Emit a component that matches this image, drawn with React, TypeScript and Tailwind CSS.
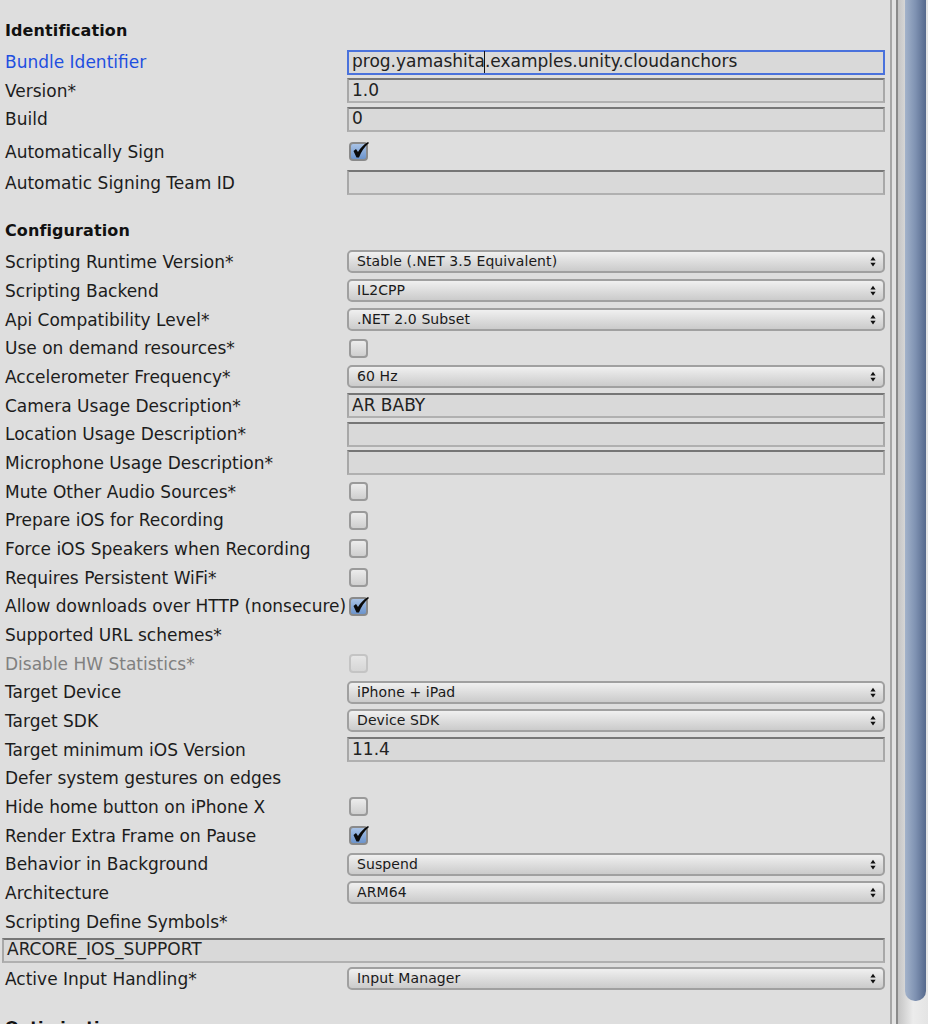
const font = { fontFamily: '"DejaVu Sans", sans-serif' };

function Check() {
  return (
    <svg viewBox="0 0 16 16" className="absolute left-[2px] top-[-2px] w-[16px] h-[16px]">
      <path d="M0.5 9 L3 7 L5 10 C7.5 6 10.5 2.5 15 0 L16 1 C11 5 8 10 6 15.5 L3.5 15.5 Z" fill="#0a0a0a" />
    </svg>
  );
}

function Checkbox({ checked, disabled }: { checked?: boolean; disabled?: boolean }) {
  const cls = checked
    ? "bg-gradient-to-b from-[#a9c3e6] to-[#6c94cc] border-[#8a8a8a]"
    : disabled
      ? "bg-gradient-to-b from-[#e6e6e6] to-[#d6d6d6] border-[#c4c4c4]"
      : "bg-gradient-to-b from-[#ececec] to-[#cfcfcf] border-[#9a9a9a]";
  return <div className={`relative ml-[2px] w-[19px] h-[19px] rounded-[4px] border-2 ${cls}`}>{checked && <Check />}</div>;
}

function Arrows() {
  return (
    <svg viewBox="0 0 8 14" className="w-[6px] h-[11px] mr-[7px]">
      <path d="M4 0.5 L7.5 5.5 L0.5 5.5 Z M4 13.5 L7.5 8.5 L0.5 8.5 Z" fill="#111" />
    </svg>
  );
}

function Select({ value }: { value: string }) {
  return (
    <div className="flex-1 h-[23px] flex items-center justify-between rounded-[5px] border-2 border-[#a0a0a0] bg-gradient-to-b from-[#f0f0f0] to-[#cbcbcb] pl-[8px] text-[14px] tracking-[0.1px] text-[#1a1a1a]">
      <span>{value}</span>
      <Arrows />
    </div>
  );
}

function Field({ value, focus }: { value?: string; focus?: boolean }) {
  const cls = focus
    ? "border-2 border-[#4a72dc]"
    : "border-2 border-t-[#767676] border-x-[#a8a8a8] border-b-[#b0b0b0]";
  return (
    <div className={`flex-1 h-[25px] flex items-center bg-[#d9d9d9] pl-[3px] text-[17px] text-[#222] ${cls}`}>
      {value}
    </div>
  );
}

function Row({ label, h = "h-[28.68px]", tone = "text-[#1c1c1c]", children }: { label: string; h?: string; tone?: string; children?: React.ReactNode }) {
  return (
    <div className={`flex items-center ${h}`}>
      <div className={`w-[347px] shrink-0 pl-[5px] pt-[2px] text-[17px] whitespace-nowrap ${tone}`}>{label}</div>
      {children}
    </div>
  );
}

function Heading({ children, h }: { children: string; h: string }) {
  return <div className={`flex items-center pl-[5px] pt-[2px] text-[16px] tracking-[0.1px] font-bold text-[#111] ${h}`}>{children}</div>;
}

export default function App() {
  return (
    <div className="h-[1024px] w-[928px] overflow-hidden flex bg-[#dedede]" style={font}>
      <div className="w-[890px] shrink-0 pt-[16px] pr-[5px]">
        <Heading h="h-[28px]">Identification</Heading>
        <div className="h-[4px]" />
        <Row label="Bundle Identifier" tone="text-[#1f4fe0]" h="h-[28px]">
          <div className="relative flex-1 flex">
            <Field value="prog.yamashita.examples.unity.cloudanchors" focus />
            <div className="absolute left-[137px] top-[1px] w-[1px] h-[22px] bg-[#111]" />
          </div>
        </Row>
        <Row label="Version*" h="h-[28.5px]"><Field value="1.0" /></Row>
        <Row label="Build" h="h-[29px]"><Field value="0" /></Row>
        <Row label="Automatically Sign" h="h-[36px]"><Checkbox checked /></Row>
        <Row label="Automatic Signing Team ID" h="h-[26.5px]"><Field /></Row>
        <div className="h-[20px]" />
        <Heading h="h-[28px]">Configuration</Heading>
        <div className="h-[3.66px]" />
        <Row label="Scripting Runtime Version*"><Select value="Stable (.NET 3.5 Equivalent)" /></Row>
        <Row label="Scripting Backend"><Select value="IL2CPP" /></Row>
        <Row label="Api Compatibility Level*"><Select value=".NET 2.0 Subset" /></Row>
        <Row label="Use on demand resources*"><Checkbox /></Row>
        <Row label="Accelerometer Frequency*"><Select value="60 Hz" /></Row>
        <Row label="Camera Usage Description*"><Field value="AR BABY" /></Row>
        <Row label="Location Usage Description*"><Field /></Row>
        <Row label="Microphone Usage Description*"><Field /></Row>
        <Row label="Mute Other Audio Sources*"><Checkbox /></Row>
        <Row label="Prepare iOS for Recording"><Checkbox /></Row>
        <Row label="Force iOS Speakers when Recording"><Checkbox /></Row>
        <Row label="Requires Persistent WiFi*"><Checkbox /></Row>
        <Row label="Allow downloads over HTTP (nonsecure)"><Checkbox checked /></Row>
        <Row label="Supported URL schemes*" />
        <Row label="Disable HW Statistics*" tone="text-[#808080]"><Checkbox disabled /></Row>
        <Row label="Target Device"><Select value="iPhone + iPad" /></Row>
        <Row label="Target SDK"><Select value="Device SDK" /></Row>
        <Row label="Target minimum iOS Version"><Field value="11.4" /></Row>
        <Row label="Defer system gestures on edges" />
        <Row label="Hide home button on iPhone X"><Checkbox /></Row>
        <Row label="Render Extra Frame on Pause"><Checkbox checked /></Row>
        <Row label="Behavior in Background"><Select value="Suspend" /></Row>
        <Row label="Architecture"><Select value="ARM64" /></Row>
        <Row label="Scripting Define Symbols*" />
        <div className="flex items-center h-[28.68px] pl-[2px]"><Field value="ARCORE_IOS_SUPPORT" /></div>
        <Row label="Active Input Handling*"><Select value="Input Manager" /></Row>
        <div className="h-[20px]" />
        <Heading h="h-[28px]">Optimization</Heading>
      </div>
      <div className="w-[2px] shrink-0 bg-[#a6a6a6]" />
      <div className="w-[4px] shrink-0 bg-[#e2e2e2]" />
      <div className="w-[2px] shrink-0 bg-[#8a8a8a]" />
      <div className="relative flex-1 bg-gradient-to-r from-[#c4c4c4] via-[#ececec] to-[#e4e4e4]">
        <div className="ml-[7px] w-[21px] h-[1001px] rounded-b-[10px] bg-gradient-to-r from-[#a3b3cb] via-[#7f92b2] to-[#56698c]" />
      </div>
    </div>
  );
}
